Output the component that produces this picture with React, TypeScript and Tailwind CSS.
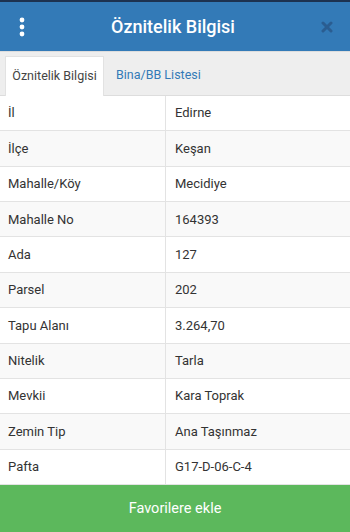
import React from "react";

const rows = [
  { label: "İl", value: "Edirne" },
  { label: "İlçe", value: "Keşan" },
  { label: "Mahalle/Köy", value: "Mecidiye" },
  { label: "Mahalle No", value: "164393" },
  { label: "Ada", value: "127" },
  { label: "Parsel", value: "202" },
  { label: "Tapu Alanı", value: "3.264,70" },
  { label: "Nitelik", value: "Tarla" },
  { label: "Mevkii", value: "Kara Toprak" },
  { label: "Zemin Tip", value: "Ana Taşınmaz" },
  { label: "Pafta", value: "G17-D-06-C-4" },
];

export default function App() {
  return (
    <div
      className="w-[350px] h-[532px] flex flex-col bg-white overflow-hidden"
      style={{ fontFamily: "Roboto, 'Liberation Sans', sans-serif" }}
    >
      <div className="h-[2px] bg-[#1d3250]" />
      {/* header */}
      <div className="h-[49px] bg-[#337ab7] flex items-center px-4 relative">
        <svg width="6" height="20" viewBox="0 0 6 20" className="ml-[3px]">
          <circle cx="3" cy="3" r="2.4" fill="#fff" />
          <circle cx="3" cy="10" r="2.4" fill="#fff" />
          <circle cx="3" cy="17" r="2.4" fill="#fff" />
        </svg>
        <div className="flex-1 text-center text-white text-[18px] font-medium">Öznitelik Bilgisi</div>
        <svg width="12" height="12" viewBox="0 0 12 12" className="mr-[1px]">
          <path d="M2 2L10 10M10 2L2 10" stroke="#2a5d91" strokeWidth="3" strokeLinecap="round" />
        </svg>
      </div>
      {/* tabs */}
      <div className="h-[45px] bg-[#eeeeee] border-t border-[#dcdcdc] flex items-end pl-[5px] border-b border-[#dddddd]">
        <div className="h-[40px] w-[99px] bg-white border-l border-t border-r border-[#e2e2e2] -mb-px flex items-center justify-center text-[12.5px] text-[#444]">
          Öznitelik Bilgisi
        </div>
        <div className="h-[40px] px-3 flex items-center text-[12.5px] text-[#337ab7]">Bina/BB Listesi</div>
      </div>
      {/* table */}
      <div className="flex flex-col">
        {rows.map((r, i) => (
          <div
            key={r.label}
            className={`h-[35.36px] flex border-b border-[#e3e3e3] text-[13px] text-[#333] ${
              i % 2 === 1 ? "bg-[#f9f9f9]" : "bg-white"
            }`}
          >
            <div className="w-[166px] border-r border-[#e3e3e3] flex items-center pl-[8px]">{r.label}</div>
            <div className="flex-1 flex items-center pl-[9px]">{r.value}</div>
          </div>
        ))}
      </div>
      <div className="flex-1 bg-[#5cb85c] flex items-center justify-center text-white text-[14.5px]">
        Favorilere ekle
      </div>
    </div>
  );
}
